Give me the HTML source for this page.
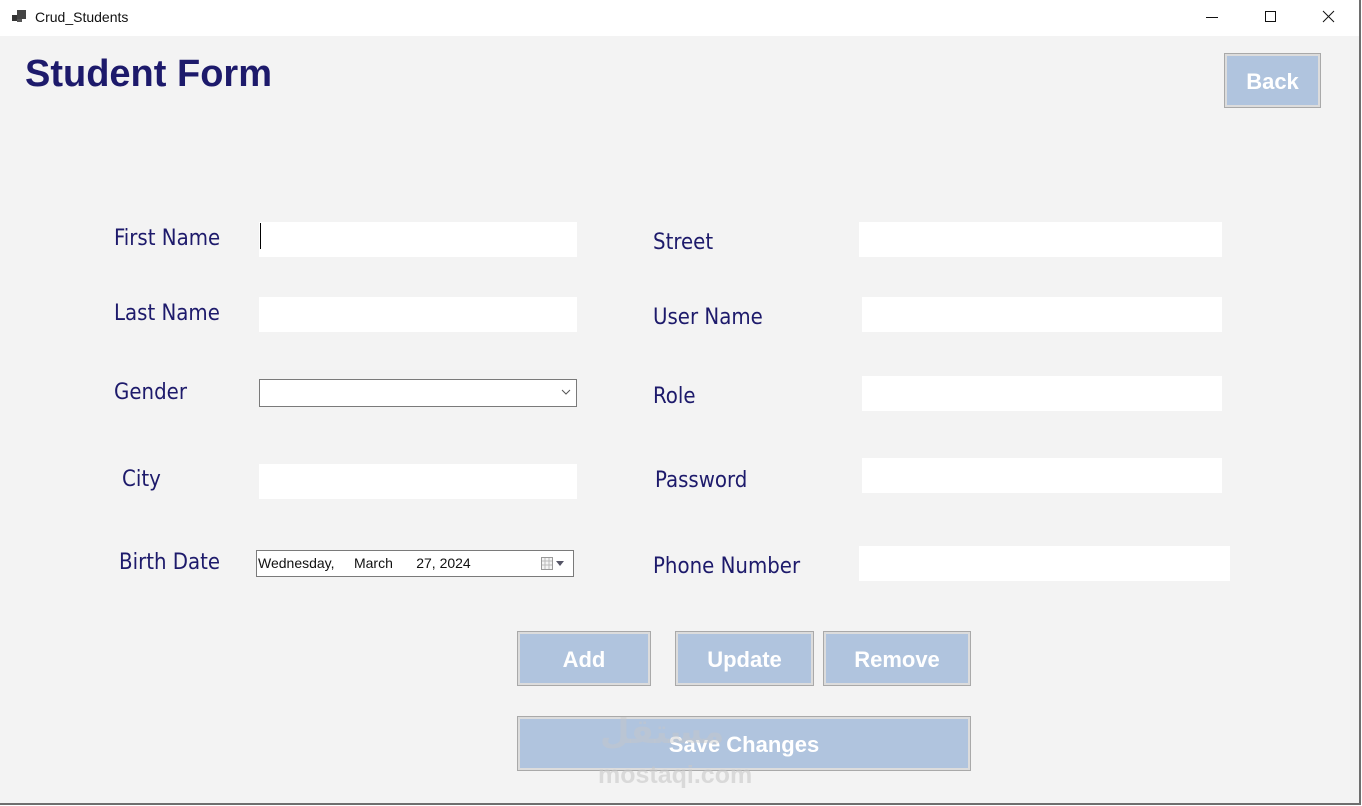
<!DOCTYPE html>
<html><head><meta charset="utf-8"><style>
*{box-sizing:border-box;margin:0;padding:0}
html,body{width:1362px;height:806px;overflow:hidden;background:#fff;font-family:"Liberation Sans",sans-serif}
#win{position:absolute;left:0;top:0;width:1361px;height:805px;background:#f3f3f3;border-right:2px solid #6e6e6e;border-bottom:2px solid #6e6e6e}
#tb{position:absolute;left:0;top:0;width:1359px;height:36px;background:#fff}
#tb .t{position:absolute;left:35px;top:9px;font-size:14px;color:#111}
.lbl{position:absolute;color:#1d1a6b;font-size:22px;font-family:"DejaVu Sans Condensed","Liberation Sans",sans-serif;font-weight:400;margin-top:2px}
.in{position:absolute;background:#fff;height:35px}
.btn{position:absolute;background:#b0c4de;border:1px solid #a9a9a9;box-shadow:inset 0 0 0 2px #dcdcdc;color:#fff;font-weight:bold;font-size:22px;display:flex;align-items:center;justify-content:center;font-family:"Liberation Sans",sans-serif;padding-top:3px}
</style></head><body>
<div id="win">
<div id="tb">
 <svg style="position:absolute;left:12px;top:10px" width="16" height="14"><rect x="0" y="5" width="5" height="6" fill="#333"/><rect x="5" y="0" width="9" height="9" fill="#444"/><rect x="5" y="9" width="5" height="3" fill="#555"/></svg>
 <div class="t">Crud_Students</div>
 <svg style="position:absolute;left:1200px;top:8px" width="150" height="20"><line x1="6" y1="9.5" x2="18" y2="9.5" stroke="#111"/><rect x="65.5" y="3.5" width="10" height="10" fill="none" stroke="#111"/><path d="M123 3L134 14M134 3L123 14" stroke="#111"/></svg>
</div>
<div style="position:absolute;left:25px;top:53px;font-size:38px;font-weight:bold;color:#1d1a6b;font-family:'Liberation Sans',sans-serif">Student Form</div>
<div class="btn" style="left:1224px;top:53px;width:97px;height:55px">Back</div>

<div class="lbl" style="left:114px;top:224px">First Name</div>
<div class="in" style="left:259px;top:222px;width:318px"><div style="position:absolute;left:1px;top:1px;width:1px;height:26px;background:#000"></div></div>
<div class="lbl" style="left:114px;top:299px">Last Name</div>
<div class="in" style="left:259px;top:297px;width:318px"></div>
<div class="lbl" style="left:114px;top:378px">Gender</div>
<div style="position:absolute;left:259px;top:379px;width:318px;height:28px;background:#fff;border:1px solid #7a7a7a"><svg style="position:absolute;right:5px;top:9px" width="10" height="7"><path d="M1 1L5 5L9 1" stroke="#555" fill="none"/></svg></div>
<div class="lbl" style="left:122px;top:465px">City</div>
<div class="in" style="left:259px;top:464px;width:318px"></div>
<div class="lbl" style="left:119px;top:548px">Birth Date</div>
<div style="position:absolute;left:256px;top:550px;width:318px;height:27px;background:#fff;border:1px solid #7a7a7a;font-size:14px;color:#111;line-height:25px;white-space:pre;padding-left:1px">Wednesday,     March      27, 2024<svg style="position:absolute;left:284px;top:6px" width="28" height="14"><rect x="0.5" y="0.5" width="11" height="12" fill="#f4f4f4" stroke="#999"/><path d="M4 1V12M8 1V12M1 4H11M1 8H11" stroke="#bbb"/><path d="M15 4L23 4L19 9Z" fill="#556"/></svg></div>

<div class="lbl" style="left:653px;top:228px">Street</div>
<div class="in" style="left:859px;top:222px;width:363px"></div>
<div class="lbl" style="left:653px;top:303px">User Name</div>
<div class="in" style="left:862px;top:297px;width:360px"></div>
<div class="lbl" style="left:653px;top:382px">Role</div>
<div class="in" style="left:862px;top:376px;width:360px"></div>
<div class="lbl" style="left:655px;top:466px">Password</div>
<div class="in" style="left:862px;top:458px;width:360px"></div>
<div class="lbl" style="left:653px;top:552px">Phone Number</div>
<div class="in" style="left:859px;top:546px;width:371px"></div>

<div class="btn" style="left:517px;top:631px;width:134px;height:55px">Add</div>
<div class="btn" style="left:675px;top:631px;width:139px;height:55px">Update</div>
<div class="btn" style="left:823px;top:631px;width:148px;height:55px">Remove</div>
<div class="btn" style="left:517px;top:716px;width:454px;height:55px">Save Changes</div>
<div style="position:absolute;left:598px;top:761px;font-size:25px;font-weight:bold;color:rgba(200,200,200,0.6);font-family:'Liberation Sans',sans-serif">mostaqi.com</div>
<div style="position:absolute;left:600px;top:712px;font-size:34px;font-weight:bold;color:rgba(200,200,200,0.45);font-family:'DejaVu Sans',sans-serif">مستقل</div>
</div>
</body></html>
